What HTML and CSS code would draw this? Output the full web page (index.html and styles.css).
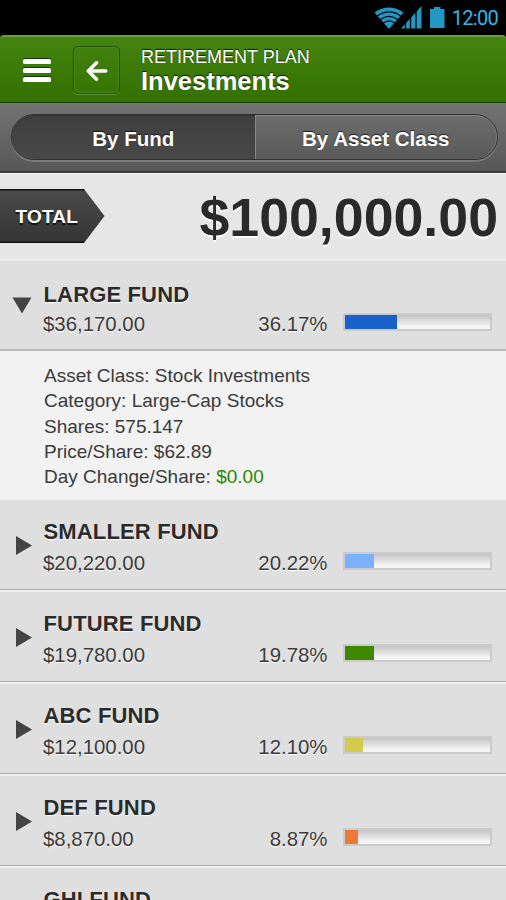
FILE: index.html
```html
<!DOCTYPE html>
<html lang="en">
<head>
  <meta charset="UTF-8">
  <meta name="viewport" content="width=device-width, initial-scale=1.0">
  <title>Retirement Plan - Investments</title>
  <link rel="stylesheet" href="styles.css">
</head>
<body>
  <div class="status-bar">
    <svg class="wifi" width="30" height="22" viewBox="0 0 30 22">
      <path d="M0.5 5.5 Q15 -4.500 29.500 5.500 L15 22 Z" fill="#2397c3"/>
      <g fill="none" stroke="#000" stroke-width="1.300">
        <path d="M3 9.200 Q15 0.600 27 9.200"/>
        <path d="M6 12.800 Q15 6 24 12.800"/>
        <path d="M9 16.300 Q15 11.500 21 16.300"/>
      </g>
    </svg>
    <svg class="signal" width="21" height="23" viewBox="0 0 21 23">
      <path d="M0 22.500 L20.500 0 V22.500 Z" fill="#2397c3"/>
      <path d="M4.500 0V23M9.500 0V23M15 0V23" stroke="#000" stroke-width="1.300"/>
    </svg>
    <svg class="battery" width="15" height="21" viewBox="0 0 15 21">
      <path d="M4 0H10.500V2H14.500V21H0V2H4Z" fill="#2397c3"/>
    </svg>
    <span class="clock">12:00</span>
  </div>

  <header class="header">
    <svg class="menu" width="28" height="26" viewBox="0 0 28 26">
      <g fill="#0d3a00">
        <rect y="0" width="28" height="5" rx="1.500"/>
        <rect y="9" width="28" height="5" rx="1.500"/>
        <rect y="18" width="28" height="5" rx="1.500"/>
      </g>
      <g fill="#fff">
        <rect y="1" width="28" height="5" rx="1.500"/>
        <rect y="10" width="28" height="5" rx="1.500"/>
        <rect y="19" width="28" height="5" rx="1.500"/>
      </g>
    </svg>
    <button class="back" aria-label="Back">
      <svg width="22" height="20" viewBox="0 0 22 20">
        <path d="M10.500 1.800 L2.300 10 L10.500 18.200 M2.800 10 H19.800" fill="none" stroke="#fff" stroke-width="3.500" stroke-linecap="round" stroke-linejoin="round"/>
      </svg>
    </button>
    <div class="titles">
      <div class="subtitle">RETIREMENT PLAN</div>
      <h1>Investments</h1>
    </div>
  </header>

  <nav class="tabs">
    <div class="segment">
      <div class="tab active">By Fund</div>
      <div class="tab">By Asset Class</div>
    </div>
  </nav>

  <section class="total">
    <div class="total-label"><span>TOTAL</span></div>
    <div class="total-amount">$100,000.00</div>
  </section>

  <main class="funds">
    <div class="fund open">
      <svg class="arrow" width="20" height="17" viewBox="0 0 20 17"><path d="M0.500 0.500H19.500L10 16.500Z" fill="#444"/></svg>
      <h2>LARGE FUND</h2>
      <span class="amount">$36,170.00</span>
      <span class="percent">36.17%</span>
      <div class="bar"><div class="fill blue" style="width: 36.17%"></div></div>
    </div>
    <div class="details">
      <p>Asset Class: Stock Investments</p>
      <p>Category: Large-Cap Stocks</p>
      <p>Shares: 575.147</p>
      <p>Price/Share: $62.89</p>
      <p>Day Change/Share: <span class="change">$0.00</span></p>
    </div>

    <div class="fund">
      <svg class="arrow" width="16" height="19" viewBox="0 0 16 19"><path d="M0 0V19L16 9.500Z" fill="#444"/></svg>
      <h2>SMALLER FUND</h2>
      <span class="amount">$20,220.00</span>
      <span class="percent">20.22%</span>
      <div class="bar"><div class="fill sky" style="width: 20.22%"></div></div>
    </div>

    <div class="fund">
      <svg class="arrow" width="16" height="19" viewBox="0 0 16 19"><path d="M0 0V19L16 9.500Z" fill="#444"/></svg>
      <h2>FUTURE FUND</h2>
      <span class="amount">$19,780.00</span>
      <span class="percent">19.78%</span>
      <div class="bar"><div class="fill green" style="width: 19.78%"></div></div>
    </div>

    <div class="fund">
      <svg class="arrow" width="16" height="19" viewBox="0 0 16 19"><path d="M0 0V19L16 9.500Z" fill="#444"/></svg>
      <h2>ABC FUND</h2>
      <span class="amount">$12,100.00</span>
      <span class="percent">12.10%</span>
      <div class="bar"><div class="fill yellow" style="width: 12.10%"></div></div>
    </div>

    <div class="fund">
      <svg class="arrow" width="16" height="19" viewBox="0 0 16 19"><path d="M0 0V19L16 9.500Z" fill="#444"/></svg>
      <h2>DEF FUND</h2>
      <span class="amount">$8,870.00</span>
      <span class="percent">8.87%</span>
      <div class="bar"><div class="fill orange" style="width: 8.87%"></div></div>
    </div>

    <div class="fund">
      <h2>GHI FUND</h2>
    </div>
  </main>
</body>
</html>
```
FILE: styles.css
```css
* {
  margin: 0;
  padding: 0;
  box-sizing: border-box;
}

body {
  font-family: "Liberation Sans", Arial, sans-serif;
  background: #000;
  color: #2b2b2b;
  height: 100vh;
  overflow: hidden;
  display: flex;
  flex-direction: column;
}

svg {
  display: block;
}

/* Status bar */
.status-bar {
  height: 35px;
  flex: none;
  display: flex;
  align-items: flex-start;
  justify-content: flex-end;
  padding: 6px 8px 0 0;
}

.wifi {
  margin-top: 1px;
}

.signal {
  margin-left: -3px;
}

.battery {
  margin: 1px 7px 0 8px;
}

.clock {
  font-family: Roboto, sans-serif;
  font-size: 20px;
  line-height: 25px;
  letter-spacing: -0.7px;
  color: #33b5e5;
}

/* Header */
.header {
  height: 68px;
  flex: none;
  display: flex;
  align-items: flex-start;
  background: linear-gradient(#44840f, #347000);
  border-top: 2px solid #6a9c45;
  border-bottom: 1px solid #114400;
  border-radius: 4px 4px 0 0;
  padding-left: 23px;
}

.menu {
  margin-top: 21px;
}

.back {
  width: 47px;
  height: 48px;
  margin: 9px 0 0 22px;
  background: linear-gradient(#40800d, #387604);
  border: 1px solid #215000;
  border-radius: 5px;
  box-shadow: inset 0 0 0 1px #4c891d, 0 1px 0 #619839;
  display: flex;
  align-items: center;
  justify-content: center;
  padding-top: 2px;
}

.back svg {
  flex: none;
}

.titles {
  margin: 9px 0 0 21px;
  color: #fff;
  text-shadow: 0 -1px 1px rgba(0, 0, 0, 0.8);
}

.subtitle {
  font-size: 18px;
  line-height: 22px;
}

h1 {
  font-size: 25.5px;
  line-height: 26px;
  font-weight: bold;
}

/* Tabs */
.tabs {
  height: 70px;
  flex: none;
  padding: 11px 8px 0 11px;
  background: linear-gradient(#747474, #575757);
  border-bottom: 2px solid #3a3a3a;
}

.segment {
  height: 46px;
  display: flex;
  border: 1px solid #303030;
  border-radius: 23px;
  overflow: hidden;
  box-shadow: 0 2px 0 #7b7b7b;
}

.tab {
  flex: 1;
  display: flex;
  align-items: center;
  justify-content: center;
  padding-top: 3px;
  font-size: 20.5px;
  font-weight: bold;
  color: #fff;
  text-shadow: 0 -1px 1px rgba(0, 0, 0, 0.7);
  background: linear-gradient(#6d6d6d, #595959);
  border-radius: 0 22px 22px 0;
  box-shadow: inset 1px 1px 0 #878787, inset -1px 0 0 #777;
}

.tab.active {
  background: linear-gradient(#3f3f3f, #484848);
  border-radius: 22px 0 0 22px;
  box-shadow: inset 0 1px 1px #333;
}

/* Total */
.total {
  height: 86px;
  flex: none;
  display: flex;
  justify-content: space-between;
  background: #e6e6e6;
  border-top: 1px solid #f8f8f8;
  padding-right: 8px;
}

.total-label {
  width: 105px;
  height: 54px;
  margin-top: 15px;
  padding-left: 15.5px;
  display: flex;
  align-items: center;
  color: #fff;
  font-size: 19px;
  font-weight: bold;
  letter-spacing: 0.2px;
  background: linear-gradient(#111 1px, #4a4a4a 2px, #353535 52px, #151515 53px);
  clip-path: polygon(0 0, 84px 0, 104.5px 50%, 84px 100%, 0 100%);
}

.total-label span {
  padding-top: 2px;
  text-shadow: 0 2px 1px rgba(0, 0, 0, 0.7);
}

.total-amount {
  font-size: 53.7px;
  line-height: 60px;
  margin-top: 13px;
  font-weight: bold;
  color: #2a2a2a;
  text-shadow: 0 2px 1px #fff;
}

/* Fund list */
.funds {
  flex: 1;
  min-height: 0;
  overflow: hidden;
}

.fund {
  height: 92px;
  display: grid;
  grid-template-columns: 43px 1fr auto 149px;
  grid-template-rows: 32px 24px;
  background: #dfdfdf;
  border-top: 2px solid #efefef;
  border-bottom: 1px solid #aeaeae;
  padding: 19px 14px 0 0;
}

.fund.open {
  grid-template-rows: 30px 24px;
  padding-top: 21px;
  border-bottom: 2px solid #bababa;
}

.arrow {
  grid-row: 1 / 3;
  margin: 17px 0 0 15.5px;
}

.open .arrow {
  margin: 15px 0 0 12px;
}

h2 {
  grid-column: 2 / 5;
  padding-left: 0.5px;
  font-size: 22px;
  line-height: 26px;
  font-weight: bold;
  letter-spacing: 0.15px;
  text-shadow: 0 1px 1px #fff;
}

.amount,
.percent {
  font-size: 20.4px;
  line-height: 24px;
  color: #3a3a3a;
  text-shadow: 0 1px 1px #fff;
}

.percent {
  margin-right: 15.5px;
}

.bar {
  height: 18px;
  margin-top: 1px;
  border: 2px solid #cbcbcb;
  background: linear-gradient(#c4c4c4, #e2e2e2 50%, #f5f5f5 80%);
}

.fill {
  height: 100%;
}

.blue {
  background: #1962c9;
}

.sky {
  background: #7ab2ff;
}

.green {
  background: #3e8800;
}

.yellow {
  background: #d3cb4e;
}

.orange {
  background: #ec783c;
}

/* Expanded fund */
.details {
  height: 147px;
  padding: 12px 0 0 44px;
  background: #f2f2f2;
  font-size: 19px;
  line-height: 25.3px;
  color: #3a3a3a;
}

.change {
  color: #2e8500;
}
```
